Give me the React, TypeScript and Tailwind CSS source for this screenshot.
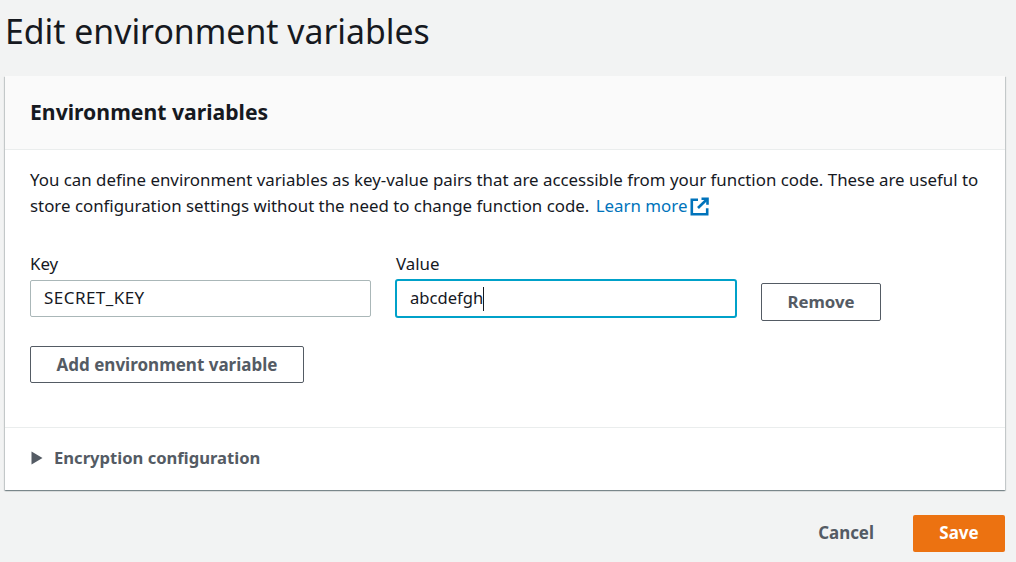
import React from "react";

export default function App() {
  return (
    <div className="w-[1016px] h-[562px] overflow-hidden bg-[#f2f3f3] font-['Noto_Sans',sans-serif] text-[#16191f]">
      <h1 className="h-[76px] pl-[5px] pt-[9px] text-[33.8px] leading-[44px] font-normal">Edit environment variables</h1>
      <div className="ml-[5px] mr-[11px] h-[414px] bg-white flex flex-col shadow-[0_1px_1px_0_rgba(0,28,36,0.3),1px_1px_1px_0_rgba(0,28,36,0.15),-1px_1px_1px_0_rgba(0,28,36,0.15)]">
        <div className="h-[74px] shrink-0 bg-[#fafafa] border-b border-[#eaeded] pl-[25px] pb-[2px] flex items-center">
          <h2 className="text-[21.2px] leading-[28px] font-bold">Environment variables</h2>
        </div>
        <div className="flex-1 pl-[25px] pt-[17px]">
          <p className="w-[960px] text-[16.87px] leading-[26px]">
            You can define environment variables as key-value pairs that are accessible from your function code. These are useful to store configuration settings without the need to change function code.{" "}
            <a className="text-[#0073bb] ml-[2px]">
              Learn more
              <svg className="inline-block ml-[3px] align-[-4px]" width="19" height="19" viewBox="0 0 19 19" fill="none" stroke="#0073bb" strokeWidth="2.6">
                <path d="M8 2.8H1.8v14.4h15.4v-6" />
                <path d="M11.5 1.8h6v6" />
                <path d="M17 2.2L8 11" />
              </svg>
            </a>
          </p>
          <div className="flex mt-[34px]">
            <div className="w-[341px]">
              <div className="text-[16.87px] leading-[22px] h-[27px]">Key</div>
              <div className="h-[37px] border border-[#aab7b8] rounded-[2px] pl-[13px] text-[17px] tracking-[0.45px] leading-[34px]">SECRET_KEY</div>
            </div>
            <div className="w-[342px] ml-[24px]">
              <div className="text-[16.87px] leading-[22px] h-[26px] pl-px">Value</div>
              <div className="h-[39px] border-2 border-[#00a1c9] rounded-[3px] pl-[13px] text-[16.6px] flex items-center">
                <span className="leading-[24px] -mt-[2px]">abcdefgh</span><span className="w-px h-[24px] bg-[#16191f]" />
              </div>
            </div>
            <button className="ml-[24px] mt-[30px] w-[120px] h-[38px] border border-[#545b64] rounded-[2px] text-[16.8px] font-bold text-[#545b64] bg-white">Remove</button>
          </div>
          <button className="block mt-[25px] w-[274px] h-[37px] border border-[#545b64] rounded-[2px] text-[17px] font-bold text-[#545b64] bg-white">Add environment variable</button>
        </div>
        <div className="h-[63px] shrink-0 border-t border-[#eaeded] pl-[26px] flex items-center text-[#545b64] pb-[2px]">
          <svg width="12" height="14" viewBox="0 0 12 14" fill="#545b64"><path d="M0.5 0.5L11.5 7L0.5 13.5Z" /></svg>
          <span className="ml-[11px] text-[16.6px] font-bold">Encryption configuration</span>
        </div>
      </div>
      <div className="flex justify-end items-center mr-[11px] mt-[25px]">
        <button className="text-[16.9px] font-bold text-[#545b64] mr-[39px] pb-[2px]">Cancel</button>
        <button className="w-[92px] h-[37px] bg-[#ec7211] rounded-[2px] text-white text-[17px] font-bold pb-[2px]">Save</button>
      </div>
    </div>
  );
}
